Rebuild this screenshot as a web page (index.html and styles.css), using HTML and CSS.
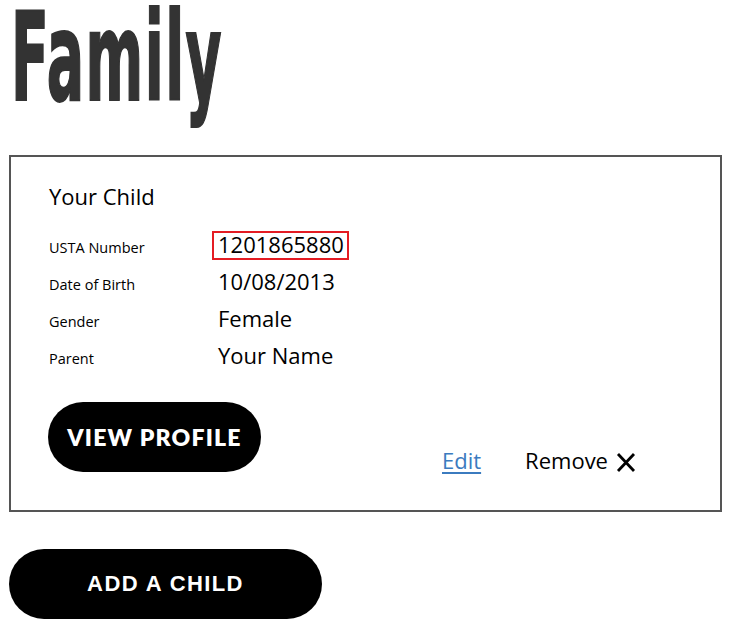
FILE: index.html
```html
<!DOCTYPE html>
<html lang="en">
<head>
<meta charset="utf-8">
<title>Family</title>
<link rel="stylesheet" href="styles.css">
</head>
<body>
<main class="page">
  <h1 class="title"><span class="title-text">Family</span></h1>

  <section class="card">
    <h2 class="card-title">Your Child</h2>
    <dl class="details">
      <dt class="label">USTA Number</dt>
      <dd class="value"><span class="highlight">1201865880</span></dd>
      <dt class="label">Date of Birth</dt>
      <dd class="value">10/08/2013</dd>
      <dt class="label">Gender</dt>
      <dd class="value">Female</dd>
      <dt class="label">Parent</dt>
      <dd class="value">Your Name</dd>
    </dl>
    <div class="card-footer">
      <button class="pill pill-profile" type="button">VIEW PROFILE</button>
      <div class="actions">
        <a class="edit-link" href="#">Edit</a>
        <button class="remove" type="button">Remove
          <svg class="remove-icon" width="20" height="19" viewBox="0 0 20 19" aria-hidden="true">
            <path d="M2 1 L18 18 M18 1 L2 18" stroke="#000" stroke-width="2.8" fill="none"/>
          </svg>
        </button>
      </div>
    </div>
  </section>

  <button class="pill pill-add" type="button">ADD A CHILD</button>
</main>
</body>
</html>
```

FILE: styles.css
```css
* { box-sizing: border-box; }

html, body {
  margin: 0;
  padding: 0;
  background: #fff;
}

body {
  font-family: "Open Sans", "Liberation Sans", sans-serif;
  color: #000;
}

.page {
  padding: 0 12px 0 9px;
}

.title {
  margin: 0;
  height: 120px;
  line-height: 115px;
  font-family: "DejaVu Sans Condensed", "DejaVu Sans", sans-serif;
  font-weight: 700;
  font-size: 123px;
  color: #333;
  white-space: nowrap;
  -webkit-text-stroke: 2px #333;
}

.title-text {
  display: inline-block;
  transform: scaleX(0.5);
  transform-origin: left center;
  letter-spacing: 3px;
  margin-left: 2px;
}

.card {
  margin-top: 35px;
  border: 2px solid #555;
  padding: 24px 30px 38px 38px;
}

.card-title {
  margin: 0;
  font-size: 22px;
  line-height: 30px;
  font-weight: 500;
}

.details {
  margin: 15px 0 0;
  display: grid;
  grid-template-columns: 169px 1fr;
  grid-auto-rows: 37px;
  align-items: baseline;
}

.label {
  margin: 0;
  font-size: 14.5px;
  font-weight: 500;
  line-height: 37px;
}

.value {
  margin: 0;
  font-size: 22px;
  line-height: 37px;
}

.highlight {
  display: inline-block;
  border: 2px solid #e41c23;
  padding: 0 3px 2px 4px;
  margin-left: -6px;
  line-height: 23px;
}

.card-footer {
  margin-top: 28px;
  display: flex;
  align-items: flex-end;
}

.pill {
  display: block;
  border: none;
  background: #000;
  color: #fff;
  border-radius: 35px;
  height: 70px;
  cursor: pointer;
  padding: 0;
}

.pill-profile {
  width: 213px;
  margin-left: -1px;
  font-family: "Lato", "Open Sans", sans-serif;
  font-weight: 800;
  font-size: 23px;
  letter-spacing: 1.2px;
}

.actions {
  margin-left: 181px;
  display: flex;
  align-items: flex-end;
  gap: 44px;
  font-size: 22px;
  line-height: 24px;
}

.edit-link {
  color: #3b7bbf;
  text-decoration: underline;
  text-underline-offset: 3px;
}

.remove {
  display: inline-flex;
  align-items: center;
  gap: 8px;
  border: none;
  background: none;
  padding: 0;
  font: inherit;
  line-height: 24px;
  color: #000;
  cursor: pointer;
}

.remove-icon {
  display: block;
  margin-top: 4px;
}

.pill-add {
  margin-top: 37px;
  width: 313px;
  font-family: "Liberation Sans", Arial, sans-serif;
  font-weight: 700;
  font-size: 22px;
  letter-spacing: 1.4px;
}
```
